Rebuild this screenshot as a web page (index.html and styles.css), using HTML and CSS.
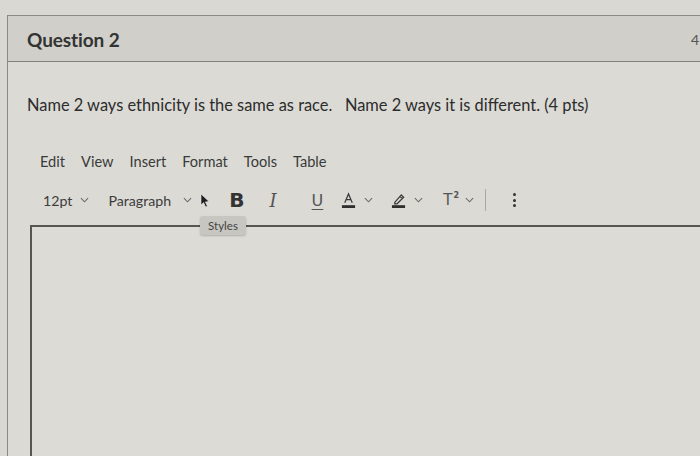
FILE: index.html
```
<!DOCTYPE html>
<html>
<head>
<meta charset="utf-8">
<link rel="stylesheet" href="styles.css">
</head>
<body>
<div class="page">
  <div class="question">
    <div class="q-header">
      <span class="q-title">Question 2</span>
      <span class="q-pts">4</span>
    </div>
    <div class="q-body">
      <p class="q-text">Name 2 ways ethnicity is the same as race.&nbsp;&nbsp; Name 2 ways it is different. (4 pts)</p>
      <div class="menubar">
        <span>Edit</span><span>View</span><span>Insert</span><span>Format</span><span>Tools</span><span>Table</span>
      </div>
      <div class="toolbar">
        <span class="tb-item size">12pt <svg class="chev" viewBox="0 0 10 6"><path d="M1 1l4 4 4-4" /></svg></span>
        <span class="tb-item para">Paragraph <svg class="chev" viewBox="0 0 10 6"><path d="M1 1l4 4 4-4" /></svg></span>
        <span class="tb-btn bold">B</span>
        <span class="tb-btn ital">I</span>
        <span class="tb-btn under">U</span>
        <span class="tb-btn color">
          <svg class="ico" viewBox="0 0 16 18"><path d="M4 11.5 L8 2 L12 11.5 M5.6 8h4.8" fill="none" stroke="#3a3a3a" stroke-width="1.3"/><rect x="1" y="14" width="14" height="3" fill="#2f2f2f"/></svg>
          <svg class="chev" viewBox="0 0 10 6"><path d="M1 1l4 4 4-4" /></svg>
        </span>
        <span class="tb-btn hilite">
          <svg class="ico" viewBox="0 0 16 18"><path d="M4 11 L11 3 L13.5 5.5 L6.5 12.5 L4 12.5 Z M9.5 4.5 L12 7" fill="none" stroke="#3a3a3a" stroke-width="1.3"/><rect x="1" y="14" width="14" height="3" fill="#2f2f2f"/></svg>
          <svg class="chev" viewBox="0 0 10 6"><path d="M1 1l4 4 4-4" /></svg>
        </span>
        <span class="tb-btn sup"><span class="sup-t">T<sup>2</sup></span><svg class="chev" viewBox="0 0 10 6"><path d="M1 1l4 4 4-4" /></svg></span>
        <span class="sep"></span>
        <span class="dots"><i></i><i></i><i></i></span>
        <svg class="cursor" viewBox="0 0 10 16"><path d="M1 1 L1 12 L3.6 9.6 L5.6 14 L7.4 13.2 L5.4 8.9 L9 8.6 Z" fill="#1e1e1e" stroke="#e8e8e8" stroke-width="0.6"/></svg>
      </div>
      <div class="editor">
        <span class="tooltip">Styles</span>
      </div>
    </div>
  </div>
</div>
</body>
</html>
```
FILE: styles.css
```
html, body {
  margin: 0;
  padding: 0;
  height: 100%;
  overflow: hidden;
}
body {
  background: #d9d8d3;
  font-family: Lato, "Open Sans", sans-serif;
  color: #2e2e2e;
}
.page {
  padding: 15px 0 0 7px;
  height: 456px;
  box-sizing: border-box;
}
.question {
  border: 1px solid #8a8a86;
  border-right: none;
  border-bottom: none;
  height: 100%;
  box-sizing: border-box;
  display: flex;
  flex-direction: column;
  background: #dbdad5;
}
.q-header {
  height: 45px;
  flex: none;
  background: #d0cfca;
  border-bottom: 1px solid #808080;
  display: flex;
  align-items: center;
  justify-content: space-between;
  padding-left: 19px;
  overflow: hidden;
}
.q-title {
  font-size: 19px;
  font-weight: 700;
  color: #333;
  letter-spacing: -0.1px;
  margin-top: 2px;
}
.q-pts {
  font-size: 14px;
  color: #555;
  margin-right: 1px;
  margin-top: 2px;
}
.q-body {
  flex: 1;
  display: flex;
  flex-direction: column;
  padding-left: 19px;
}
.q-text {
  margin: 0;
  padding-top: 33px;
  font-size: 16.4px;
  line-height: 20px;
  color: #2c2c2c;
}
.menubar {
  margin-top: 38px;
  margin-left: 13px;
  display: flex;
  gap: 16px;
  font-size: 14.6px;
  line-height: 18px;
  color: #3a3a3a;
}
.toolbar {
  position: relative;
  margin-top: 17px;
  margin-left: 16px;
  height: 24px;
  display: flex;
  align-items: center;
  font-size: 14.2px;
  color: #3d3d3d;
}
.tb-item {
  display: flex;
  align-items: center;
}
.chev {
  width: 9px;
  height: 6px;
  fill: none;
  stroke: #6a6a6a;
  stroke-width: 1.2;
  margin-left: 8px;
}
.size { margin-right: 19px; }
.para { margin-right: 37px; }
.para .chev { margin-left: 12px; }
.tb-btn {
  display: flex;
  align-items: center;
}
.bold {
  font-family: "DejaVu Sans", sans-serif;
  font-weight: 700;
  font-size: 20px;
  color: #333;
  margin-right: 25px;
}
.ital {
  font-family: "DejaVu Serif", serif;
  font-style: italic;
  font-size: 18px;
  color: #555;
  margin-right: 35px;
}
.under {
  font-family: "DejaVu Sans", sans-serif;
  font-size: 16px;
  text-decoration: underline;
  text-underline-offset: 3px;
  color: #555;
  margin-right: 18px;
}
.ico {
  width: 15px;
  height: 17px;
}
.color { margin-right: 18px; }
.hilite { margin-right: 20px; }
.sup-t {
  font-family: "DejaVu Sans", sans-serif;
  font-size: 15px;
  color: #555;
  line-height: 18px;
}
.sup-t sup {
  font-size: 8px;
  font-weight: 700;
  vertical-align: 7px;
  line-height: 0;
  margin-left: 1px;
}
.sup .chev { margin-left: 6px; }
.sep {
  width: 1px;
  height: 22px;
  background: #a8a8a4;
  margin-left: 11px;
  margin-right: 27px;
}
.dots {
  display: flex;
  flex-direction: column;
  gap: 2.5px;
}
.dots i {
  display: block;
  width: 3px;
  height: 3px;
  border-radius: 50%;
  background: #333;
}
.cursor {
  position: absolute;
  left: 157px;
  top: 5px;
  width: 10px;
  height: 16px;
}
.editor {
  position: relative;
  margin-top: 13px;
  margin-left: 3px;
  flex: 1;
  border-top: 2px solid #555552;
  border-left: 2px solid #555552;
  background: #dcdbd6;
}
.tooltip {
  position: absolute;
  left: 168px;
  top: -11px;
  width: 46px;
  height: 19px;
  box-sizing: border-box;
  background: #c7c6c1;
  border-radius: 3px;
  box-shadow: 0 1px 2px rgba(0,0,0,0.2);
  font-size: 11.5px;
  line-height: 19px;
  text-align: center;
  color: #444;
}
```
